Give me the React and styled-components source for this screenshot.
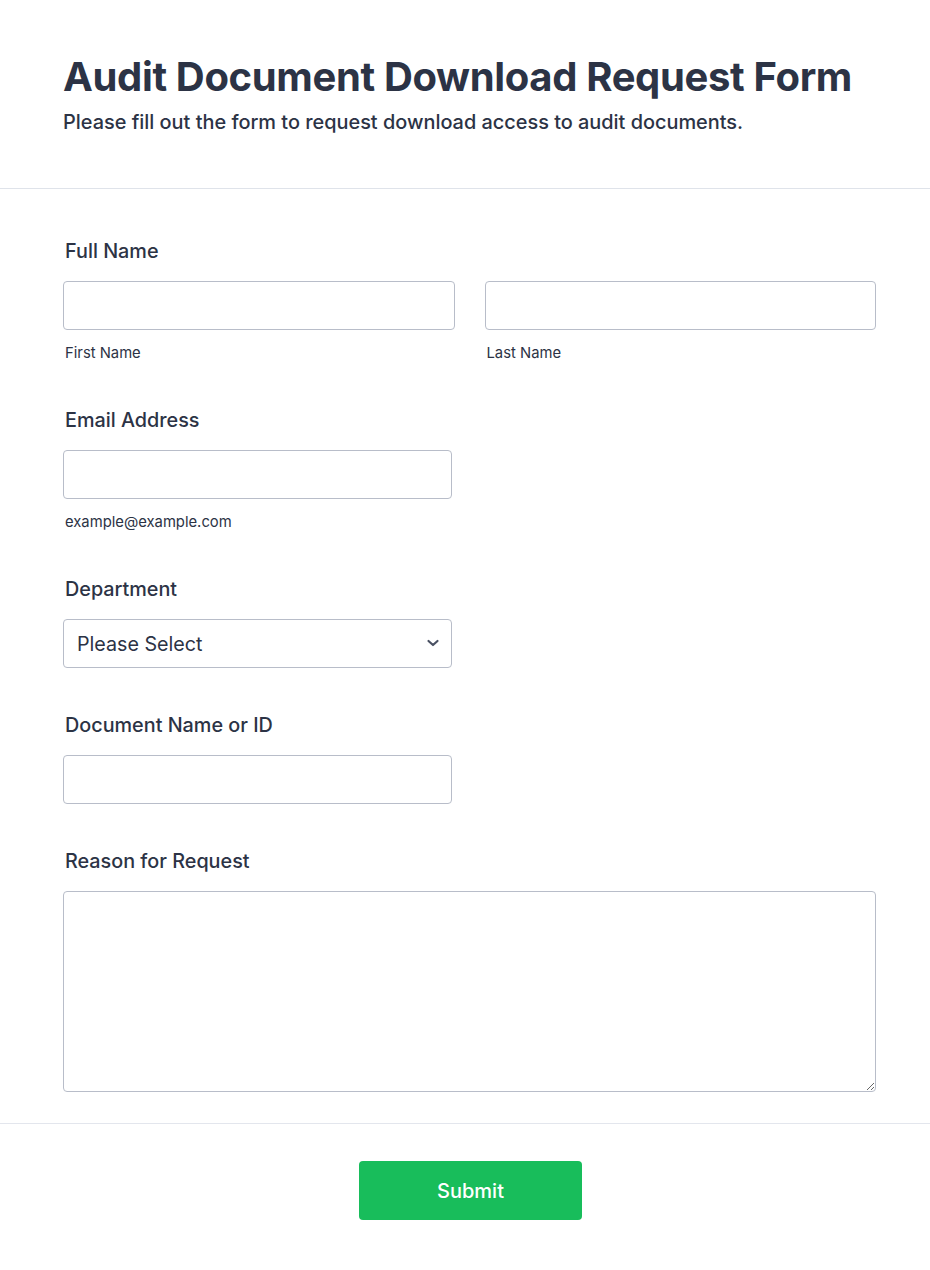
import styled, { createGlobalStyle } from 'styled-components'

const GlobalS = createGlobalStyle`
    body {
        margin: 0;
        background: #ffffff;
        font-family: Inter, "Noto Sans", sans-serif;
        color: #2c3345;
    }
    * { box-sizing: border-box; }
`
const PageS = styled.div`
    width: 930px;
    min-height: 1270px;
    background: #ffffff;
`
const HeaderS = styled.header`
    padding: 53px 54px 54px 63px;
    border-bottom: 1px solid #dfe3ea;
    h1 {
        margin: 0 0 9px;
        font-size: 40px;
        line-height: 48px;
        font-weight: 700;
        letter-spacing: -0.35px;
    }
    p {
        margin: 0;
        font-size: 19.9px;
        line-height: 24px;
        font-weight: 500;
    }
`
const FieldsS = styled.div`
    padding: 50px 54px 31px 63px;
    display: flex;
    flex-direction: column;
    gap: 45px;
    border-bottom: 1px solid #e3e6ed;
`
const FieldS = styled.div`
    display: flex;
    flex-direction: column;
`
const LabelS = styled.label`
    padding-left: 2px;
    margin-bottom: 18px;
    font-size: 19.8px;
    line-height: 24px;
    font-weight: 500;
`
const RowS = styled.div`
    display: grid;
    grid-template-columns: 1fr 1fr;
    gap: 30px;
`
const ColS = styled.div`
    display: flex;
    flex-direction: column;
    max-width: ${ p => p.narrow ? '389px' : 'none' };
`
const InputS = styled.input`
    height: 49px;
    width: 100%;
    border: 1px solid #b8bdc9;
    border-radius: 4px;
    padding: 0 12px;
    font-family: inherit;
    font-size: 19.6px;
    color: #2c3345;
    background: #ffffff;
    outline: none;
`
const SubLabelS = styled.span`
    margin-top: 13px;
    padding-left: 2px;
    font-size: 14.8px;
    line-height: 20px;
    color: #2c3345;
`
const SelectWrapS = styled.div`
    position: relative;
    max-width: 389px;
    svg {
        position: absolute;
        right: 12px;
        top: 19px;
        pointer-events: none;
    }
`
const SelectS = styled.select`
    appearance: none;
    width: 100%;
    height: 49px;
    border: 1px solid #b8bdc9;
    border-radius: 4px;
    padding: 0 36px 0 13px;
    font-family: inherit;
    font-size: 19.7px;
    color: #2c3345;
    background: #ffffff;
    outline: none;
`
const TextAreaS = styled.textarea`
    width: 100%;
    height: 201px;
    border: 1px solid #b8bdc9;
    border-radius: 4px;
    padding: 12px;
    font-family: inherit;
    font-size: 19.6px;
    color: #2c3345;
    resize: vertical;
    outline: none;
`
const FooterS = styled.div`
    display: flex;
    justify-content: center;
    padding: 37px 52px 40px 63px;
`
const ButtonS = styled.button`
    width: 223px;
    height: 59px;
    border: none;
    border-radius: 4px;
    background: #18bd5b;
    color: #ffffff;
    font-family: inherit;
    font-size: 20px;
    font-weight: 500;
    cursor: pointer;
`

const App = () => {
    return(
        <PageS>
            <GlobalS />
            <HeaderS>
                <h1>Audit Document Download Request Form</h1>
                <p>Please fill out the form to request download access to audit documents.</p>
            </HeaderS>
            <FieldsS>
                <FieldS>
                    <LabelS>Full Name</LabelS>
                    <RowS>
                        <ColS>
                            <InputS type='text' />
                            <SubLabelS>First Name</SubLabelS>
                        </ColS>
                        <ColS>
                            <InputS type='text' />
                            <SubLabelS>Last Name</SubLabelS>
                        </ColS>
                    </RowS>
                </FieldS>
                <FieldS>
                    <LabelS>Email Address</LabelS>
                    <ColS narrow>
                        <InputS type='email' />
                        <SubLabelS>example@example.com</SubLabelS>
                    </ColS>
                </FieldS>
                <FieldS>
                    <LabelS>Department</LabelS>
                    <SelectWrapS>
                        <SelectS defaultValue=''>
                            <option value=''>Please Select</option>
                            <option>Finance</option>
                            <option>Operations</option>
                            <option>Compliance</option>
                        </SelectS>
                        <svg width='14' height='10' viewBox='0 0 14 10'>
                            <path d='M2.5 3 L7 7 L11.5 3' fill='none' stroke='#4a5163' strokeWidth='2.2' strokeLinecap='round' strokeLinejoin='round' />
                        </svg>
                    </SelectWrapS>
                </FieldS>
                <FieldS>
                    <LabelS>Document Name or ID</LabelS>
                    <ColS narrow>
                        <InputS type='text' />
                    </ColS>
                </FieldS>
                <FieldS>
                    <LabelS>Reason for Request</LabelS>
                    <TextAreaS />
                </FieldS>
            </FieldsS>
            <FooterS>
                <ButtonS type='button'>Submit</ButtonS>
            </FooterS>
        </PageS>
    )
}
export default App
